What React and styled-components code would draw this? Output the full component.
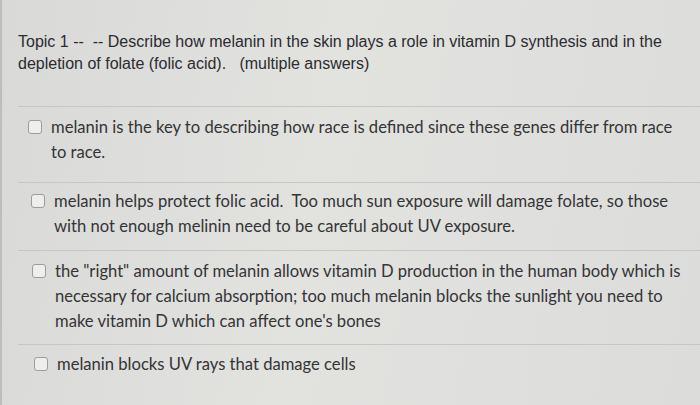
import React from 'react';
import styled, { createGlobalStyle } from 'styled-components';

const Global = createGlobalStyle`
  html, body {
    margin: 0;
    padding: 0;
    width: 700px;
    height: 405px;
    overflow: hidden;
  }
`;

const Page = styled.div`
  width: 700px;
  height: 405px;
  box-sizing: border-box;
  background: linear-gradient(100deg, #d9d9d8 0%, #e2e2df 45%, #dcdcdb 100%);
  border-left: 2px solid #bdbdbb;
  padding: 31px 0 0 16px;
  overflow: hidden;
`;

const Question = styled.div`
  font-family: "Liberation Sans", Arial, sans-serif;
  font-size: 16px;
  line-height: 22px;
  color: #2b2b30;
  padding-right: 10px;
  padding-bottom: 31px;
  border-bottom: 1px solid #c6c6c4;
`;

const Options = styled.ul`
  list-style: none;
  margin: 0;
  padding: 0;
`;

const Option = styled.li`
  display: flex;
  align-items: flex-start;
  gap: 9px;
  padding: ${p => p.$top}px 0 ${p => p.$bottom}px ${p => p.$indent}px;
  border-bottom: ${p => (p.$last ? 'none' : '1px solid #c6c6c4')};
`;

const Box = styled.span`
  flex: none;
  width: 12px;
  height: 12px;
  margin-top: 5px;
  border: 1.5px solid #9c9c9c;
  border-radius: 3px;
  background: #eeeeec;
`;

const Label = styled.span`
  font-family: Lato, "Open Sans", sans-serif;
  font-size: 16.6px;
  line-height: 25px;
  color: #343436;
  white-space: pre;
`;

const options = [
  {
    lines: ['melanin is the key to describing how race is defined since these genes differ from race', 'to race.'],
    indent: 10, top: 7.5, bottom: 17.5,
  },
  {
    lines: ['melanin helps protect folic acid.  Too much sun exposure will damage folate, so those', 'with not enough melinin need to be careful about UV exposure.'],
    indent: 13, top: 5.5, bottom: 11.5,
  },
  {
    lines: ['the "right" amount of melanin allows vitamin D production in the human body which is', 'necessary for calcium absorption; too much melanin blocks the sunlight you need to', 'make vitamin D which can affect one\'s bones'],
    indent: 14, top: 8, bottom: 9.5,
  },
  {
    lines: ['melanin blocks UV rays that damage cells'],
    indent: 16, top: 7.5, bottom: 10,
  },
];

export default function App() {
  return (
    <>
      <Global />
      <Page>
        <Question>
          Topic 1 --&nbsp;&nbsp;-- Describe how melanin in the skin plays a role in vitamin D synthesis and in the depletion of folate (folic acid).&nbsp;&nbsp; (multiple answers)
        </Question>
        <Options>
          {options.map((o, i) => (
            <Option key={i} $indent={o.indent} $top={o.top} $bottom={o.bottom} $last={i === options.length - 1}>
              <Box />
              <Label>
                {o.lines.map((line, j) => (
                  <React.Fragment key={j}>
                    {j > 0 && <br />}
                    {line}
                  </React.Fragment>
                ))}
              </Label>
            </Option>
          ))}
        </Options>
      </Page>
    </>
  );
}
